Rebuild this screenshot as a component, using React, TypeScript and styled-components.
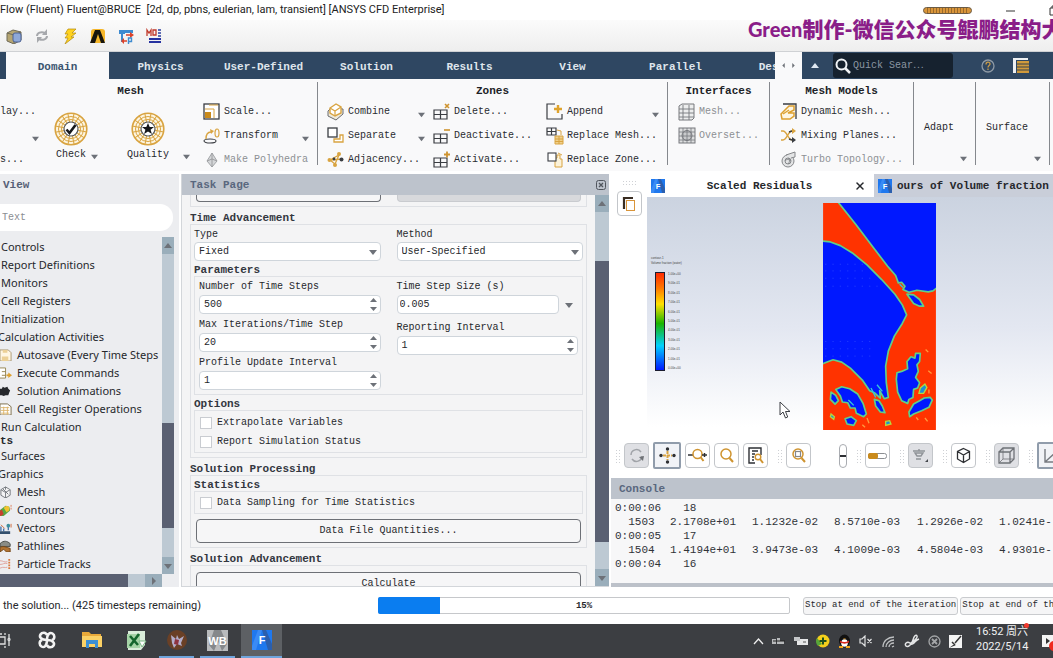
import React, { useId } from "react";
import styled, { createGlobalStyle, css } from "styled-components";
import { X } from "lucide-react";

const mono = `"Liberation Mono", "Noto Sans CJK SC", monospace`;
const sans = `"Noto Sans", "Noto Sans CJK SC", sans-serif`;
const captionFont = `Roboto, "Noto Sans CJK SC", sans-serif`;
const gold = "#d9a441";
const ink = "#3a3d42";

const GlobalStyle = createGlobalStyle`
  * { box-sizing: border-box; }
  body { margin: 0; overflow: hidden; background: #fff; color: #26282c; font: 10px/14px ${mono}; }
  button, input, select { font: inherit; color: inherit; margin: 0; padding: 0; }
  h2, h3 { margin: 0; }
  svg { display: block; flex: none; }
`;

const Window = styled.div`
  display: flex;
  flex-direction: column;
  height: 100vh;
  overflow: hidden;
`;

/* ---------- title bar and quick toolbar ---------- */

const TitleBar = styled.header`
  display: flex;
  align-items: center;
  justify-content: space-between;
  height: 20px;
  flex: none;
  white-space: pre;
  font: 11px/20px ${captionFont};
  color: #222;
`;
const WindowControls = styled.div`
  display: flex;
  align-items: center;
  gap: 34px;
  overflow: hidden;
  width: 130px;
`;
const QuickBar = styled.div`
  position: relative;
  display: flex;
  align-items: center;
  gap: 12px;
  height: 32px;
  flex: none;
  padding-left: 6px;
  background: linear-gradient(#fbfbfb, #eeeeee);
  border-bottom: 1px solid #cfd1d4;
`;
const IconButton = styled.button`
  display: grid;
  place-items: center;
  width: 16px;
  height: 16px;
  border: 0;
  background: none;
`;
const Watermark = styled.div`
  position: absolute;
  left: 748px;
  top: -5px;
  white-space: nowrap;
  font: 900 21px/26px "Noto Sans CJK SC", sans-serif;
  color: #8a1d88;
  span { font: 900 20px/26px Lato, sans-serif; }
`;

/* ---------- ribbon ---------- */

const Nav = styled.nav`
  display: flex;
  height: 27px;
  flex: none;
  background: #2f4762;
  color: #e4e9ef;
`;
const TabStrip = styled.div`
  display: flex;
  width: 775px;
  overflow: hidden;
  padding-left: 6px;
`;
const NavTab = styled.button<{ $active?: boolean }>`
  flex: 0 0 103px;
  padding-top: 3px;
  border: 0;
  background: ${(p) => (p.$active ? "#f9f9fa" : "none")};
  color: ${(p) => (p.$active ? "#3c5570" : "#dfe5ec")};
  font: bold 11px/24px ${mono};
`;
const TabScroll = styled.div`
  display: flex;
  align-items: center;
  justify-content: space-evenly;
  width: 27px;
  background: #f9f9fa;
`;
const Collapse = styled.button`
  display: grid;
  place-items: center;
  width: 26px;
  margin-right: 5px;
  border: 0;
  background: none;
`;
const Search = styled.label`
  display: flex;
  align-items: center;
  gap: 2px;
  width: 120px;
  margin: 1px 0;
  padding-left: 2px;
  border-radius: 3px;
  background: #16222f;
  input {
    width: 90px;
    border: 0;
    background: none;
    outline: none;
    font: 10px/14px ${mono};
    &::placeholder { color: #8b96a2; opacity: 1; }
  }
`;
const NavTools = styled.div`
  display: flex;
  align-items: center;
  gap: 17px;
  margin-left: 28px;
`;

const Ribbon = styled.div`
  display: flex;
  height: 95px;
  flex: none;
  padding: 3px 0 6px;
  background: #f9f9fa;
  border-bottom: 3px solid #fff;
`;
const Group = styled.section<{ $w: number }>`
  display: flex;
  flex-direction: column;
  flex: 0 0 ${(p) => p.$w}px;
  border-right: 1px solid #85888d;
`;
const GroupTitle = styled.h2<{ $shift?: boolean }>`
  font: bold 11px/18px ${mono};
  text-align: center;
  color: #202226;
  ${(p) => p.$shift && css`padding-right: 56px;`}
`;
const GroupBody = styled.div<{ $pad: number }>`
  display: flex;
  padding-left: ${(p) => p.$pad}px;
`;
const Stack = styled.div<{ $w: number }>`
  display: flex;
  flex-direction: column;
  flex: 0 0 ${(p) => p.$w}px;
`;
const Command = styled.button<{ $off?: boolean }>`
  display: flex;
  align-items: center;
  gap: 3px;
  height: 24px;
  border: 0;
  background: none;
  text-align: left;
  white-space: nowrap;
  color: ${(p) => (p.$off ? "#8d9094" : "#2a2c30")};
  svg:nth-of-type(2) { margin: 5px 8px 0 auto; }
`;
const BigCommand = styled.button<{ $w: number; $gap?: number }>`
  display: flex;
  align-items: flex-end;
  gap: ${(p) => p.$gap ?? 0}px;
  width: ${(p) => p.$w}px;
  height: 62px;
  border: 0;
  background: none;
  > svg { margin-bottom: 2px; }
`;
const BigFace = styled.span<{ $w: number }>`
  display: flex;
  flex-direction: column;
  align-items: center;
  gap: 2px;
  width: ${(p) => p.$w}px;
`;
const CutColumn = styled.div`
  display: flex;
  flex-direction: column;
  width: 51px;
`;
const DropOnly = styled(Command)`
  justify-content: flex-end;
  padding: 5px 12px 0 0;
`;
const PlainGroup = styled.button<{ $w: number }>`
  display: flex;
  flex-direction: column;
  align-items: flex-end;
  justify-content: space-between;
  flex: 0 0 ${(p) => p.$w}px;
  padding: 39px 8px 3px 10px;
  border: 0;
  border-right: 1px solid #85888d;
  background: none;
  span { width: 100%; text-align: left; }
`;

/* ---------- main area ---------- */

const Main = styled.main`
  display: flex;
  flex: 1;
  min-height: 0;
  gap: 2px;
`;
const Outline = styled.aside`
  display: flex;
  flex-direction: column;
  flex: 0 0 179px;
  overflow: hidden;
  background: #ecedf0;
`;
const OutlineTitle = styled.h2`
  padding-left: 3px;
  font: bold 11px/22px ${mono};
  color: #566076;
`;
const Filter = styled.input`
  width: 173px;
  height: 27px;
  margin: 8px 0 6px;
  padding: 0 2px;
  border: 0;
  border-radius: 0 13px 13px 0;
  background: #fff;
  &::placeholder { color: #8a8d92; opacity: 1; }
`;
const TreeArea = styled.div`
  display: flex;
  flex: 1;
  min-height: 0;
`;
const Tree = styled.ul`
  width: 162px;
  margin: 0;
  padding: 1px 0 0;
  overflow: hidden;
  list-style: none;
  font: 11px/18px ${sans};
`;
const TreeItem = styled.li<{ $level: number }>`
  display: flex;
  align-items: center;
  gap: 5px;
  height: 18px;
  margin-left: ${(p) => [-2, 1, 0][p.$level]}px;
  white-space: nowrap;
`;
const TreeHeading = styled.li`
  font: bold 11px/11px ${mono};
`;
const HScroll = styled.div`
  display: flex;
  justify-content: flex-end;
  width: 162px;
  height: 13px;
  border-left: 128px solid #5a6072;
  background: #bdc9d3;
`;

const VBar = styled.div<{ $w: number }>`
  display: flex;
  flex-direction: column;
  flex: 0 0 ${(p) => p.$w}px;
  background: #bdc9d3;
`;
const BarEnd = styled.button`
  display: grid;
  place-items: center;
  flex: 0 0 17px;
  width: 100%;
  border: 0;
  background: #9aaebb;
`;
const BarTrack = styled.div<{ $grow: number }>`
  flex: ${(p) => p.$grow} 1 0;
`;
const BarThumb = styled(BarTrack)`
  background: #5a6072;
`;

const TaskPanel = styled.section`
  display: flex;
  flex-direction: column;
  flex: 0 0 428px;
  min-width: 0;
  border: 1px solid #d3d6da;
  border-top: 0;
  border-right: 0;
  background: #f4f4f5;
`;
const PanelTitle = styled.header`
  display: flex;
  align-items: center;
  justify-content: space-between;
  height: 21px;
  flex: none;
  padding: 0 0 0 8px;
  background: #bdc3cc;
  h2 { font: bold 11px/20px ${mono}; color: #59677e; }
`;
const TaskBody = styled.div`
  display: flex;
  flex: 1;
  min-height: 0;
`;
const Form = styled.form`
  flex: 1;
  min-width: 0;
  overflow: hidden;
  padding: 0 8px;
`;
const CutBox = styled.div`
  display: flex;
  gap: 16px;
  height: 12px;
  padding: 0 5px;
  border: 1px solid #dfe1e5;
  border-top: 0;
`;
const CutButton = styled.button<{ $off?: boolean }>`
  flex: 1;
  height: 7px;
  border: 1px solid ${(p) => (p.$off ? "#c9cbcf" : "#6d7076")};
  border-top: 0;
  border-radius: 0 0 4px 4px;
  background: ${(p) => (p.$off ? "#d8d9dc" : "#f6f6f7")};
`;
const SectionTitle = styled.h3<{ $inner?: boolean }>`
  margin-top: ${(p) => (p.$inner ? 3 : 5)}px;
  font: bold 11px/12px ${mono};
  color: #33373f;
`;
const Box = styled.div<{ $pad: string }>`
  padding: ${(p) => p.$pad};
  border: 1px solid #dfe1e5;
`;
const Columns = styled.div`
  display: grid;
  grid-template-columns: 1fr 1fr;
  gap: 16px;
`;
const FieldStack = styled.div<{ $gap: number }>`
  display: flex;
  flex-direction: column;
  gap: ${(p) => p.$gap}px;
`;
const FieldLabel = styled.label<{ $tall?: boolean }>`
  display: block;
  line-height: ${(p) => (p.$tall ? 17 : 14)}px;
`;
const FieldFrame = styled.div`
  display: flex;
  align-items: center;
  gap: 6px;
  height: 19px;
  padding-right: 3px;
  border: 1px solid #cfd5db;
  border-radius: 4px;
  background: #fff;
  input, select {
    flex: 1;
    min-width: 0;
    height: 17px;
    padding-left: 4px;
    border: 0;
    border-radius: 4px;
    background: none;
    appearance: none;
    outline: none;
  }
`;
const SizeRow = styled.div`
  display: flex;
  align-items: center;
  gap: 6px;
  padding-right: 5px;
  ${FieldFrame} { flex: 1; padding: 0; input { padding-left: 2px; } }
`;
const CheckLabel = styled.label`
  display: flex;
  align-items: center;
  gap: 5px;
  height: 19px;
  padding-left: 5px;
  input {
    width: 12px;
    height: 12px;
    appearance: none;
    border: 1px solid #c9ccd1;
    background: #fff;
  }
`;
const WideButton = styled.button`
  display: block;
  width: calc(100% - 4px);
  height: 24px;
  margin: 5px 2px 4px;
  border: 1px solid #6d7076;
  border-radius: 4px;
  background: #f6f6f7;
`;

/* ---------- graphics and console ---------- */

const RightSide = styled.section`
  display: flex;
  flex-direction: column;
  flex: 1;
  min-width: 0;
  overflow: hidden;
  background: #fff;
`;
const Graphics = styled.div`
  display: flex;
  flex: 1;
  min-height: 0;
`;
const SideTools = styled.div`
  display: flex;
  flex-direction: column;
  align-items: center;
  gap: 6px;
  width: 36px;
  padding: 6px 0 0 0;
`;
const ViewArea = styled.div`
  display: flex;
  flex-direction: column;
  flex: 1;
  min-width: 0;
`;
const PlotTabs = styled.div`
  display: flex;
  height: 23px;
  flex: none;
  background: #c9ced9;
`;
const PlotTab = styled.button<{ $active?: boolean }>`
  display: flex;
  align-items: center;
  justify-content: ${(p) => (p.$active ? "space-between" : "flex-start")};
  gap: 5px;
  flex: 0 0 ${(p) => (p.$active ? 227 : 190)}px;
  padding: 0 8px 0 4px;
  border: 0;
  background: ${(p) => (p.$active ? "#fff" : "none")};
  font: bold 11px/20px ${mono};
  white-space: nowrap;
`;
const Plot = styled.div`
  position: relative;
  display: flex;
  flex: 1;
  min-height: 0;
  padding: 6px 0 0 4px;
  background: linear-gradient(#cbd3e0, #e3e7f1 55%, #ffffff 97%);
`;
const Legend = styled.div`
  width: 172px;
  padding-top: 53px;
  font: 3px/5px "Liberation Sans", sans-serif;
  color: #444;
`;
const LegendScale = styled.div`
  display: flex;
  gap: 3px;
  height: 99px;
  margin: 6px 0 0 4px;
`;
const LegendBar = styled.div`
  width: 10px;
  border: 1px solid #1b1c30;
  background: linear-gradient(#ff2a00, #ff7a00 16%, #ffe000 32%, #19b400 52%, #00d0ff 75%, #0018ff);
`;
const LegendTicks = styled.div`
  display: flex;
  flex-direction: column;
  justify-content: space-between;
`;
const Pointer = styled.svg`
  position: absolute;
  left: 132px;
  top: 204px;
`;
const ViewTools = styled.div`
  display: flex;
  align-items: center;
  gap: 4px;
  height: 44px;
  flex: none;
  padding: 0 0 1px 4px;
  overflow: hidden;
`;
const ToolButton = styled.button<{ $kind?: "on" | "off" }>`
  display: grid;
  place-items: center;
  flex: none;
  width: ${(p) => (p.$kind === "on" ? 28 : 25)}px;
  height: ${(p) => (p.$kind === "on" ? 27 : 25)}px;
  border: ${(p) => (p.$kind === "on" ? "2px solid #909cab" : "1px solid #c3c6ca")};
  border-radius: ${(p) => (p.$kind === "on" ? 2 : 4)}px;
  background: ${(p) => (p.$kind === "off" ? "#dfe0e4" : p.$kind === "on" ? "#f1f3f7" : "#fff")};
`;
const Handle = styled.i<{ $flat?: boolean; $first?: boolean }>`
  flex: none;
  width: ${(p) => (p.$flat ? 14 : 5)}px;
  height: ${(p) => (p.$flat ? 5 : 14)}px;
  margin-left: ${(p) => (p.$first || p.$flat ? 0 : 5)}px;
  background: radial-gradient(#cfd1d5 1px, transparent 1px) 0 0 / 3px 3px;
`;
const MiniSlider = styled.div`
  display: grid;
  place-items: center;
  width: 8px;
  height: 24px;
  margin-left: 24px;
  border: 1px solid #a9acb1;
  border-radius: 4px;
`;
const ConsoleArea = styled.div`
  flex: none;
  height: 88px;
  padding-top: 2px;
  border-bottom: 4px solid #bcc1c9;
  background: #f7f7f8;
  overflow: hidden;
`;
const ConsoleTable = styled.table`
  margin-left: 4px;
  border-spacing: 0;
  table-layout: fixed;
  width: 466px;
  font: 11px/14px ${mono};
  color: #303338;
  td { padding: 0; white-space: pre; overflow: visible; }
`;

/* ---------- status and task bars ---------- */

const StatusBar = styled.footer`
  display: flex;
  align-items: center;
  height: 37px;
  flex: none;
  white-space: nowrap;
`;
const StatusText = styled.span`
  flex: 0 0 378px;
  padding-left: 3px;
  font: 11px/18px ${captionFont};
`;
const Progress = styled.div`
  position: relative;
  flex: 0 0 412px;
  height: 17px;
  margin-right: 13px;
  border: 1px solid #c6c8cb;
  border-radius: 2px;
  text-align: center;
  font: bold 9px/16px ${mono};
`;
const ProgressFill = styled.div`
  position: absolute;
  inset: -1px auto -1px -1px;
  border-radius: 2px 0 0 2px;
  background: #0a7df0;
`;
const StopButton = styled.button`
  flex: none;
  height: 18px;
  margin-right: 2px;
  padding: 0 1px;
  border: 1px solid #c9cbce;
  border-radius: 3px;
  background: #f5f5f6;
  font: 9px/15px ${mono};
`;
const TaskBar = styled.div`
  display: flex;
  align-items: stretch;
  height: 34px;
  flex: none;
  background: #3c3e42;
  color: #f0f1f2;
`;
const LauncherButton = styled.button<{ $state?: "cut" | "open" | "active" }>`
  display: grid;
  place-items: center;
  width: ${(p) => ({ cut: 24, open: 35, active: 41, idle: 45 })[p.$state ?? "idle"]}px;
  margin-right: ${(p) => (p.$state === "open" ? 6 : 0)}px;
  border: 0;
  border-bottom: 2px solid ${(p) => (p.$state && p.$state !== "cut" ? "#6ea4dc" : "transparent")};
  background: ${(p) => (p.$state === "active" ? "#5d6064" : "none")};
  ${(p) => p.$state === "cut" && css`justify-content: start;`}
`;
const Launchers = styled.div`
  display: flex;
  flex: 1;
`;
const Tray = styled.div`
  display: flex;
  align-items: center;
  gap: 8px;
`;
const Clock = styled.div`
  position: relative;
  width: 53px;
  margin: 0 9px 0 14px;
  font: 11px/15px Roboto, "Noto Sans CJK SC", sans-serif;
  white-space: nowrap;
  &::after {
    content: "";
    position: absolute;
    right: 0;
    top: -1px;
    width: 5px;
    height: 5px;
    border-radius: 50%;
    background: #f03a2e;
  }
`;

/* ---------- drawings ---------- */

const Tri = ({ up, left, right, color = "#6d7178", s = 8 }: { up?: boolean; left?: boolean; right?: boolean; color?: string; s?: number }) => (
  <svg width={s} height={s} viewBox="0 0 8 8">
    <path fill={color} d={up ? "M0 6h8L4 1z" : left ? "M6 0v8L2 4z" : right ? "M2 0v8l4-4z" : "M0 2h8L4 7z"} />
  </svg>
);

const art: Record<string, React.ReactNode> = {
  cube3: <><path d="M1 5l6-3 8 2v8l-7 4-7-3z" fill="#b5a571" stroke="#6f6a58" /><path d="M1 5l7 2v9M8 7l7-3" fill="none" stroke="#6f6a58" /><rect x="7" y="5" width="8" height="9" rx="2" fill="#8ea8d8" stroke="#4c6294" /></>,
  refresh: <g fill="none" stroke="#a6a8ac" strokeWidth="2"><path d="M3 8c0-3 4-5 8-3" /><path d="M13 8c0 3-4 5-8 3" /><path d="M13 1v6H8zM3 15V9h5z" fill="#a6a8ac" strokeWidth="0" /></g>,
  bolt: <path d="M6 1h8l-4 4h4l-5 4h3l-9 7 3-6H3l3-4H3z" fill="#ffd21f" stroke="#b38a0c" strokeWidth=".7" />,
  ansys: <><rect x="1" y="1" width="14" height="14" rx="3" fill="#f5b62a" /><path d="M0 15L5 2h5l5 13h-4L8 6l-3 9z" fill="#17140c" /></>,
  params: <><path d="M1 2h14v3H1z" fill="#3e8bd0" /><path d="M4 5v9M1 5h6" stroke="#3e8bd0" strokeWidth="2" /><path d="M8 7h5M5 13h4" stroke="#d9412a" strokeWidth="1.6" /><path d="M12 4l4 3-4 3zM6 10l-3 3 3 3z" fill="#d9412a" /><path d="M10.500 16V10h3v3.500h-3" fill="none" stroke="#3e8bd0" strokeWidth="1.4" /></>,
  macro: <><path d="M1 8V2l2 3 2-3v6M7 2h3v5H7z" fill="none" stroke="#c0392b" strokeWidth="1.3" /><path d="M12 2h3M12 5h3M12 8h3" stroke="#2c3f9e" strokeWidth="1.4" /><path d="M3 11h12M3 14h12" stroke="#2632a0" strokeWidth="2" /></>,
  scale: <><rect x="1" y="1" width="15" height="15" fill="#fff" stroke={ink} strokeWidth="1.3" /><path d="M2 6h9v9M6 2h9" fill="none" stroke={gold} /><path d="M2 9h6v6H2z" fill="#c98a1b" /></>,
  transform: <g fill="none"><path d="M3 12c0-5 2-7 5-7" stroke={gold} strokeWidth="1.4" /><path d="M7 2l4 2-3 3z" fill={gold} /><ellipse cx="14" cy="6" rx="2" ry="4" stroke={gold} strokeWidth="1.2" /><ellipse cx="7" cy="14" rx="6" ry="2" stroke={ink} strokeWidth="1.1" /></g>,
  poly: <><path d="M9 2l5 8-5 6-5-6z" fill="#d5d7d9" stroke="#a3a5a8" /><path d="M9 2v14M4 10l5-2 5 2" fill="none" stroke="#97999c" strokeWidth=".9" /></>,
  combine: <><path d="M1 8l3-3 12 1v5l-7 6-8-4z" fill="#efe9da" stroke="#6b6d70" /><path d="M3 5l6-4 5 3v6l-6 3-5-3z" fill="#fff" stroke={gold} strokeWidth="1.4" /><path d="M3 5l5 3 6-4M8 8v5" fill="none" stroke={gold} strokeWidth="1.2" /></>,
  separate: <><rect x="1" y="1" width="9" height="9" fill="#fff" stroke={ink} strokeWidth="1.3" /><path d="M13 8h3v7H7v-3h6z" fill="#fff" stroke={gold} strokeWidth="1.3" /></>,
  adjacency: <><path d="M3 9l9-5-4 9-5-4 12-1" fill="none" stroke={gold} strokeWidth="1.3" /><g fill={gold}><circle cx="2.500" cy="9" r="2" /><circle cx="8" cy="14" r="2" /><circle cx="12" cy="3" r="2" /></g><circle cx="7" cy="8" r="1.4" fill={ink} /><circle cx="14.500" cy="8.500" r="2" fill={ink} /></>,
  gridDel: <><path d="M1 7h13v9H1zM7.500 7v9M1 11.500h13" fill="none" stroke={ink} strokeWidth="1.2" /><path d="M12 1l4 4M16 1l-4 4" stroke="#cf9430" strokeWidth="1.600" /></>,
  gridMinus: <><path d="M1 7h13v9H1zM7.500 7v9M1 11.500h13" fill="none" stroke={ink} strokeWidth="1.2" /><path d="M11 3h6" stroke="#cf9430" strokeWidth="1.600" /></>,
  gridPlus: <><path d="M1 7h13v9H1zM7.500 7v9M1 11.500h13" fill="none" stroke={ink} strokeWidth="1.2" /><path d="M11 3.500h6M14 .5v6" stroke="#cf9430" strokeWidth="1.800" /></>,
  append: <><path d="M9 1H1v15h15v-5" fill="none" stroke={ink} strokeWidth="1.2" /><path d="M8 6h8M12 2v8" stroke="#dfa32d" strokeWidth="2.400" /></>,
  replMesh: <><path d="M1 1h9v7H1zM5.500 1v7M1 4.500h9" fill="none" stroke={ink} strokeWidth="1.2" /><path d="M9 9h8v8H9z" fill="#efd08c" stroke={gold} /><path d="M9 12h8M9 14.500h8M13 9v8" stroke={gold} /><path d="M11 3l4 1v4" fill="none" stroke={gold} /></>,
  replZone: <><path d="M9 7h2V4h3v4h2v8H9z" fill="#fbf2da" stroke={gold} /><rect x="2" y="2" width="8" height="8" fill="#fff" stroke={ink} strokeWidth="1.1" /><path d="M12 2l4 2" stroke={gold} /></>,
  meshGrid: <g fill="#eceded" stroke="#77797d"><path d="M1 3l3-2h12v14l-2 2H1z" /><path d="M1 10h15M5 2v15M11 2v15M1 6h15M1 14h15" strokeWidth=".9" /></g>,
  overset: <g fill="#dedfe0" stroke="#77797d"><rect x="1" y="1" width="16" height="15" /><circle cx="9" cy="8.500" r="5" fill="#c9cacc" /><path d="M5 1v15M9 1v15M13 1v15M1 5h16M1 9h16M1 13h16" strokeWidth=".8" /></g>,
  dynamic: <><path d="M3 1h13v15" fill="none" stroke={ink} strokeWidth="1.3" /><path d="M1 11l8-8h5v4l-6 3h6v3l-4 3H2z" fill="#fdf6e4" stroke="#dda02f" strokeWidth="1.5" /><path d="M3 11l6-4" stroke="#dda02f" strokeWidth="1.3" /></>,
  mixing: <g fill="none" strokeWidth="1.5"><path d="M1 4h2c4 0 5 9 9 9" stroke={gold} /><path d="M1 13h2c4 0 5-9 9-9" stroke={gold} /><path d="M9 5l3-1M9 12l3 1" stroke={ink} /><path d="M12 1l4 3-4 3z" fill={gold} /><path d="M12 10l4 3-4 3z" fill={ink} /></g>,
  turbo: <g fill="#e3e4e5" stroke="#85878a"><circle cx="8" cy="10" r="6" /><path d="M6 4l9-3v5l-4 1" /><circle cx="8" cy="10" r="3" /><path d="M8 7c2 1 2 4 0 6M5 10c1-2 4-2 6 0" fill="none" /></g>,
  save: <><path d="M0 1h9l3 3v9H0z" fill="#fff6e3" stroke="#a99772" /><path d="M2 8h7v5H2zM3 1h5v3H3z" fill="#ecd096" /></>,
  exec: <><path d="M0 1h6v11H0M2 5h4M2 9h4" fill="#fff" stroke="#96834f" /><path d="M7 9h3" stroke="#dda02f" strokeWidth="2" /><path d="M9 6l4 3-4 3z" fill="#dda02f" /></>,
  gear: <path d="M3 2l2 1 3-1 1 2 2 2-1 2-1 3-3 0-2 1-2-1-2 0V4h2z" fill="#26282c" />,
  cell: <><path d="M0 1h8l4 3v9H0z" fill="#fff" stroke="#7a6a45" /><path d="M1 5h9M1 8h9M1 11h9M4 4v9M8 4v9" stroke="#dcb56b" /></>,
  meshBall: <g fill="#f5f5f6" stroke="#70747a"><path d="M6 1l5 3v6l-5 3-5-3V4z" /><path d="M1 4l5 3 5-3M6 7v6M6 1v3M3 3l6 6" /></g>,
  contour: <><path d="M-2 8l8-6 4 1 1 4-7 6h-6z" fill="#58a744" /><path d="M4 4l3-2 3 1 0 4-3 2z" fill="#f2c230" /><path d="M-1 8l3-2 2 5-3 2h-2z" fill="#c8402f" /><path d="M12 1v6" stroke="#dd7a55" strokeDasharray="2 1" /></>,
  vectors: <><path d="M1 10V5M4 10V7M9 9V3" stroke="#3e6ea8" strokeWidth="1.4" /><path d="M0 10h11v3H0z" fill="#33506e" /><circle cx="9" cy="4" r="2" fill="#3c8f9e" /><path d="M1 3l4 4M12 2v4" stroke="#d26a3a" /></>,
  path: <><path d="M0 4c4-4 8-3 11 0v3H0z" fill="#8a8d86" stroke="#474b46" /><path d="M0 8c4-2 7 0 11 1v4H7l-3-3-4 3z" fill="#b07332" stroke="#704416" /></>,
  particle: <><path d="M0 3c4 0 4 2 8 1M0 7c4 0 4-2 8-1M0 11c4-2 5 0 8-1" fill="none" stroke="#e2a19a" /><path d="M10 1v12" stroke="#d97a40" strokeDasharray="2 1" strokeWidth="2" /></>,
};

const Art = ({ n, s = 18 }: { n: string; s?: number }) => {
  const box = s === 16 ? 16 : s === 12 ? 13 : 18;
  return <svg width={s} height={s} viewBox={`0 0 ${box} ${box}`}>{art[n]}</svg>;
};

const MeshWheel = ({ star }: { star?: boolean }) => (
  <svg width="34" height="34" viewBox="0 0 34 34" fill="none" stroke={gold}>
    <circle cx="17" cy="17" r="15.800" fill="#fdf5e0" strokeWidth="1.6" />
    <circle cx="17" cy="17" r="12.500" />
    <circle cx="17" cy="17" r="9.500" />
    {Array.from({ length: 16 }, (_, i) => (
      <path key={i} d="M17 1v9" transform={`rotate(${i * 22.5 + 11} 17 17)`} />
    ))}
    <circle cx="17" cy="17" r="7" fill="#fff" stroke="#55585c" strokeWidth="1.2" />
    {star ? <path fill="#16181b" stroke="none" d="M17 11l1.700 4h4.300l-3.400 2.700 1.300 4.300-3.900-2.500-3.900 2.500 1.300-4.300-3.400-2.700h4.300z" /> : <path d="M12.500 17.500l3 3.500 6-8" stroke="#16181b" strokeWidth="2.600" />}
  </svg>
);

const FluentLogo = ({ s }: { s: number }) => (
  <svg width={s} height={s} viewBox="0 0 20 20">
    <rect width="20" height="20" fill="#1f78ee" />
    <path d="M10 0h4l6 14v6h-4z" fill="#2b5fae" />
    <path d="M6 0h4L4 20H0v-4z" fill="#3a8bf5" />
    <text x="10" y="14" fontSize="11" fontWeight="bold" fill="#fff" textAnchor="middle" fontFamily="Liberation Sans, sans-serif">F</text>
  </svg>
);

const PhaseField = () => {
  const edge = { stroke: "#5fd08a", strokeWidth: 5, strokeLinejoin: "round" as const };
  return (
    <svg width="113" height="227" viewBox="68 100 339 682">
      <rect x="68" y="100" width="339" height="682" fill="#ff3300" />
      <g fill="#0018ff" {...edge}>
        <path d="M112 96L166 164 216 230 262 290 286 318 294 340 304 338 314 350 308 360 326 368 350 362 384 367 398 364 411 354V96z" />
        <path d="M64 214L90 217 120 228 156 250 200 286 244 330 284 374 306 406 319 436 306 462 282 500 264 545 256 590 258 640 264 684 252 688 238 664 240 686 222 670 208 664 186 632 150 596 124 578 98 571 84 576 64 584z" />
        <path d="M320 374L340 376 358 390 370 410 358 410 340 402z" />
        <path d="M346 552L360 552 358 576 350 586 354 606 346 624 358 640 352 656 340 660 338 684 326 690 322 702 304 694 292 668 288 630 290 610 304 606 322 598 320 576 332 562 344 566z" />
        <path d="M390 684L396 692 386 714 364 724 340 734 328 742 326 728 340 704 358 694 372 686z" />
        <path d="M106 660L124 652 148 658 172 674 188 702 198 734 190 742 168 732 164 716 150 716 142 700 126 698 120 680z" />
        <path d="M92 668L106 678 114 694 104 704 90 690z" />
        <path d="M222 690L236 694 246 710 254 730 240 728 226 710z" />
        <path d="M134 748L152 742 168 754 160 768 140 764z" />
      </g>
      <g fill="#1d8fd8" stroke="#b7d93c" strokeWidth="4">
        <path d="M374 644L380 654 370 672 356 672 360 656z" />
        <path d="M92 734L102 742 100 750 90 742z" />
        <path d="M256 756L268 754 272 764 256 768z" />
        <path d="M230 646L246 666M212 656L226 684M144 692L160 708M298 344l10 10" fill="none" stroke="#34c8d8" />
      </g>
      <g stroke="#ff9a3c" strokeWidth="4"><path d="M376 540l8 8M384 604l10 8M386 660v12M348 744l6 8M374 746l8 10M200 746l6 16M186 766l8 8" /></g>
      <path d="M74 284h120M74 304h130M74 326h150M74 350h160M74 516h150M74 538h150M74 560h140" stroke="#2c48ff" strokeWidth="2" strokeDasharray="4 18" />
    </svg>
  );
};

/* ---------- composed controls ---------- */

const Cmd = ({ icon, text, off, drop }: { icon: string; text: string; off?: boolean; drop?: boolean }) => (
  <Command type="button" $off={off}>
    <Art n={icon} />
    {text}
    {drop && <Tri s={7} />}
  </Command>
);

const Pick = ({ label, value }: { label: string; value: string }) => {
  const id = useId();
  return (
    <div>
      <FieldLabel htmlFor={id}>{label}</FieldLabel>
      <FieldFrame>
        <select id={id} defaultValue={value}><option>{value}</option></select>
        <Tri />
      </FieldFrame>
    </div>
  );
};

const Spin = ({ label, value }: { label: string; value: string }) => {
  const id = useId();
  return (
    <div>
      <FieldLabel $tall htmlFor={id}>{label}</FieldLabel>
      <FieldFrame>
        <input id={id} defaultValue={value} />
        <svg width="7" height="15" viewBox="0 0 7 15"><path fill="#6d7178" d="M0 5h7L3.500 1zM0 10h7l-3.500 4z" /></svg>
      </FieldFrame>
    </div>
  );
};

const Check = ({ label }: { label: string }) => (
  <CheckLabel><input type="checkbox" />{label}</CheckLabel>
);

const ScrollBar = ({ w, parts }: { w: number; parts: [number, number, number] }) => (
  <VBar $w={w}>
    <BarEnd type="button" aria-label="Scroll up"><Tri up /></BarEnd>
    <BarTrack $grow={parts[0]} />
    <BarThumb $grow={parts[1]} />
    <BarTrack $grow={parts[2]} />
    <BarEnd type="button" aria-label="Scroll down"><Tri /></BarEnd>
  </VBar>
);

const navTabs = ["Domain", "Physics", "User-Defined", "Solution", "Results", "View", "Parallel", "Design"];

const tree: { t: string; l: number; i?: string }[] = [
  { t: "Controls", l: 1 }, { t: "Report Definitions", l: 1 }, { t: "Monitors", l: 1 },
  { t: "Cell Registers", l: 1 }, { t: "Initialization", l: 1 }, { t: "Calculation Activities", l: 0 },
  { t: "Autosave (Every Time Steps", l: 2, i: "save" }, { t: "Execute Commands", l: 2, i: "exec" },
  { t: "Solution Animations", l: 2, i: "gear" }, { t: "Cell Register Operations", l: 2, i: "cell" },
  { t: "Run Calculation", l: 1 }, { t: "ts", l: -1 }, { t: "Surfaces", l: 1 }, { t: "Graphics", l: 0 },
  { t: "Mesh", l: 2, i: "meshBall" }, { t: "Contours", l: 2, i: "contour" }, { t: "Vectors", l: 2, i: "vectors" },
  { t: "Pathlines", l: 2, i: "path" }, { t: "Particle Tracks", l: 2, i: "particle" },
];

const consoleRows: string[][] = [
  ["0:00:06", "  18"],
  ["  1503", "2.1708e+01", "1.1232e-02", "8.5710e-03", "1.2926e-02", "1.0241e-"],
  ["0:00:05", "  17"],
  ["  1504", "1.4194e+01", "3.9473e-03", "4.1009e-03", "4.5804e-03", "4.9301e-"],
  ["0:00:04", "  16"],
];

const ticks = ["1.00e+00", "9.00e-01", "8.00e-01", "7.00e-01", "6.00e-01", "5.00e-01", "4.00e-01", "3.00e-01", "2.00e-01", "1.00e-01", "0.00e+00"];

const Lens = ({ children, s = 17 }: { children?: React.ReactNode; s?: number }) => (
  <svg width={s} height={s} viewBox="0 0 17 17" fill="none" stroke="#cf9430" strokeWidth="1.5">
    <circle cx="8" cy="7" r="5" /><path d="M11.500 11l3.500 4" strokeWidth="2" />{children}
  </svg>
);

export default function App() {
  const sizeId = useId();
  return (
    <Window>
      <GlobalStyle />
      <TitleBar>
        <span>Flow (Fluent) Fluent@BRUCE  [2d, dp, pbns, eulerian, lam, transient] [ANSYS CFD Enterprise]</span>
        <WindowControls>
          <svg width="49" height="7" viewBox="0 0 49 7">
            <rect x=".5" y=".5" width="48" height="6" rx="3" fill="#d9953a" stroke="#6b5b45" />
            <path d="M4 3.500h41" stroke="#9b6a2a" strokeWidth="5" strokeDasharray="1 2" />
          </svg>
          <svg width="9" height="9" viewBox="0 0 9 9"><path d="M0 5h9" stroke="#333" /></svg>
          <svg width="11" height="11" viewBox="0 0 11 11"><path d="M1 3h7v7H1zM3 3V1h7v7H8" fill="none" stroke="#333" /></svg>
        </WindowControls>
      </TitleBar>
      <QuickBar>
        {["cube3", "refresh", "bolt", "ansys", "params", "macro"].map((n) => (
          <IconButton key={n} type="button" aria-label={n}><Art n={n} s={16} /></IconButton>
        ))}
        <Watermark><span>Green</span>制作-微信公众号鲲鹏结构大</Watermark>
      </QuickBar>

      <Nav>
        <TabStrip>
          {navTabs.map((t, i) => <NavTab key={t} type="button" $active={i === 0}>{t}</NavTab>)}
        </TabStrip>
        <TabScroll><Tri left s={5} /><Tri right s={5} /></TabScroll>
        <Collapse type="button" aria-label="Collapse ribbon"><Tri up color="#dfe8f2" /></Collapse>
        <Search>
          <svg width="16" height="16" viewBox="0 0 16 16" fill="none" stroke="#f0f3f6" strokeWidth="2"><circle cx="6.500" cy="6.500" r="5" /><path d="M10 10l5 5" strokeWidth="2.500" /></svg>
          <input aria-label="Quick Search" placeholder="Quick Sear⋯" />
        </Search>
        <NavTools>
          <svg width="14" height="14" viewBox="0 0 14 14" fill="none" stroke="#8e9aa6" strokeWidth="1.3"><circle cx="7" cy="7" r="6" /><path d="M5 5.500c0-3 4-3 4-.5 0 1.500-2 1.500-2 3.500M7 9.500v1.500" stroke="#c69a4a" /></svg>
          <svg width="17" height="17" viewBox="0 0 17 17"><path d="M1 1h15v2H1zM1 1h3v15H1z" fill="#eef0f2" /><path d="M5 4h12v12H5z" fill="#d09a3c" /><path d="M5 7h12M5 10h12M5 13h12" stroke="#37414b" /></svg>
        </NavTools>
      </Nav>

      <Ribbon>
        <Group $w={318}>
          <GroupTitle $shift>Mesh</GroupTitle>
          <GroupBody $pad={0}>
            <CutColumn>
              <Command type="button">lay...</Command>
              <DropOnly type="button" aria-label="More"><Tri s={7} /></DropOnly>
              <Command type="button">s...</Command>
            </CutColumn>
            <BigCommand type="button" $w={76}><BigFace $w={40}><MeshWheel />Check</BigFace><Tri s={7} /></BigCommand>
            <BigCommand type="button" $w={76} $gap={14}><BigFace $w={42}><MeshWheel star />Quality</BigFace><Tri s={7} /></BigCommand>
            <Stack $w={114}>
              <Cmd icon="scale" text="Scale..." />
              <Cmd icon="transform" text="Transform" drop />
              <Cmd icon="poly" text="Make Polyhedra" off />
            </Stack>
          </GroupBody>
        </Group>
        <Group $w={350}>
          <GroupTitle>Zones</GroupTitle>
          <GroupBody $pad={9}>
            <Stack $w={106}>
              <Cmd icon="combine" text="Combine" drop />
              <Cmd icon="separate" text="Separate" drop />
              <Cmd icon="adjacency" text="Adjacency..." />
            </Stack>
            <Stack $w={113}>
              <Cmd icon="gridDel" text="Delete..." />
              <Cmd icon="gridMinus" text="Deactivate..." />
              <Cmd icon="gridPlus" text="Activate..." />
            </Stack>
            <Stack $w={121}>
              <Cmd icon="append" text="Append" drop />
              <Cmd icon="replMesh" text="Replace Mesh..." />
              <Cmd icon="replZone" text="Replace Zone..." />
            </Stack>
          </GroupBody>
        </Group>
        <Group $w={102}>
          <GroupTitle>Interfaces</GroupTitle>
          <GroupBody $pad={10}>
            <Stack $w={90}>
              <Cmd icon="meshGrid" text="Mesh..." off />
              <Cmd icon="overset" text="Overset..." off />
            </Stack>
          </GroupBody>
        </Group>
        <Group $w={144}>
          <GroupTitle>Mesh Models</GroupTitle>
          <GroupBody $pad={10}>
            <Stack $w={130}>
              <Cmd icon="dynamic" text="Dynamic Mesh..." />
              <Cmd icon="mixing" text="Mixing Planes..." />
              <Cmd icon="turbo" text="Turbo Topology..." off />
            </Stack>
          </GroupBody>
        </Group>
        <PlainGroup type="button" $w={62}><span>Adapt</span><Tri s={7} /></PlainGroup>
        <PlainGroup type="button" $w={74}><span>Surface</span><Tri s={7} /></PlainGroup>
      </Ribbon>

      <Main>
        <Outline>
          <OutlineTitle>View</OutlineTitle>
          <Filter aria-label="Filter Text" placeholder="Text" />
          <TreeArea>
            <Tree>
              {tree.map(({ t, l, i }) =>
                l < 0 ? <TreeHeading key={t}>{t}</TreeHeading> : (
                  <TreeItem key={t} $level={l}>{i && <Art n={i} s={12} />}{t}</TreeItem>
                ))}
            </Tree>
            <ScrollBar w={12} parts={[169, 105, 29]} />
          </TreeArea>
          <HScroll><BarEnd type="button" aria-label="Scroll right"><Tri right /></BarEnd></HScroll>
        </Outline>

        <TaskPanel>
          <PanelTitle>
            <h2>Task Page</h2>
            <IconButton type="button" aria-label="Close">
              <svg width="10" height="10" viewBox="0 0 10 10" fill="none" stroke="#50555d"><rect x=".5" y=".5" width="9" height="9" rx="2" /><path d="M3 3l4 4M7 3l-4 4" strokeWidth="1.300" /></svg>
            </IconButton>
          </PanelTitle>
          <TaskBody>
            <Form>
              <CutBox><CutButton type="button" aria-label="Previous" /><CutButton type="button" aria-label="Next" $off /></CutBox>
              <SectionTitle>Time Advancement</SectionTitle>
              <Box $pad="3px 3px 4px">
                <Columns>
                  <Pick label="Type" value="Fixed" />
                  <Pick label="Method" value="User-Specified" />
                </Columns>
                <SectionTitle $inner>Parameters</SectionTitle>
                <Box $pad="1px 4px 4px">
                  <Columns>
                    <FieldStack $gap={2}>
                      <Spin label="Number of Time Steps" value="500" />
                      <Spin label="Max Iterations/Time Step" value="20" />
                      <Spin label="Profile Update Interval" value="1" />
                    </FieldStack>
                    <FieldStack $gap={5}>
                      <div>
                        <FieldLabel $tall htmlFor={sizeId}>Time Step Size (s)</FieldLabel>
                        <SizeRow>
                          <FieldFrame><input id={sizeId} defaultValue="0.005" /></FieldFrame>
                          <Tri />
                        </SizeRow>
                      </div>
                      <Spin label="Reporting Interval" value="1" />
                    </FieldStack>
                  </Columns>
                </Box>
                <SectionTitle $inner>Options</SectionTitle>
                <Box $pad="2px 0 1px">
                  <Check label="Extrapolate Variables" />
                  <Check label="Report Simulation Status" />
                </Box>
              </Box>
              <SectionTitle>Solution Processing</SectionTitle>
              <Box $pad="0 3px">
                <SectionTitle $inner>Statistics</SectionTitle>
                <Box $pad="1px 0"><Check label="Data Sampling for Time Statistics" /></Box>
                <WideButton type="button">Data File Quantities...</WideButton>
              </Box>
              <SectionTitle>Solution Advancement</SectionTitle>
              <Box $pad="1px 3px">
                <WideButton type="button">Calculate</WideButton>
              </Box>
            </Form>
            <ScrollBar w={14} parts={[49, 282, 27]} />
          </TaskBody>
        </TaskPanel>

        <RightSide>
          <Graphics>
            <SideTools>
              <Handle $flat />
              <ToolButton type="button" aria-label="Copy view">
                <svg width="14" height="14" viewBox="0 0 14 14" fill="none"><path d="M11 1H2v11" stroke="#3a2d22" strokeWidth="2.200" /><rect x="4.500" y="3.500" width="8" height="10" fill="#fff" stroke="#d9953a" /></svg>
              </ToolButton>
            </SideTools>
            <ViewArea>
              <PlotTabs>
                <PlotTab type="button" $active><FluentLogo s={14} />Scaled Residuals<X size={12} strokeWidth={3} /></PlotTab>
                <PlotTab type="button"><FluentLogo s={14} />ours of Volume fraction</PlotTab>
              </PlotTabs>
              <Plot>
                <Legend>
                  contour-1<br />Volume fraction (water)
                  <LegendScale>
                    <LegendBar />
                    <LegendTicks>{ticks.map((t) => <span key={t}>{t}</span>)}</LegendTicks>
                  </LegendScale>
                </Legend>
                <PhaseField />
                <Pointer width="12" height="18" viewBox="0 0 12 18"><path d="M1 1v13l3-3 2.500 6 2.200-1L6.500 10.500H11z" fill="#fff" stroke="#3c3f45" /></Pointer>
              </Plot>
            </ViewArea>
          </Graphics>
          <ViewTools>
            <Handle $first />
            <ToolButton type="button" $kind="off" aria-label="Rotate"><svg width="17" height="17" viewBox="0 0 17 17" fill="none" stroke="#a0a3a8" strokeWidth="1.500"><path d="M3 8a5.500 5.500 0 0 1 10-3M14 9a5.500 5.500 0 0 1-10 3" /><path d="M11 10l5-1-1 5z" fill="#6f7277" strokeWidth="0" /></svg></ToolButton>
            <ToolButton type="button" $kind="on" aria-label="Pan"><svg width="17" height="17" viewBox="0 0 17 17"><path d="M8.500 4v9M4 8.500h9" stroke={gold} strokeWidth="2" strokeDasharray="3 1" /><g fill="#2e3034"><circle cx="8.500" cy="2" r="1.700" /><circle cx="8.500" cy="15" r="1.700" /><circle cx="2" cy="8.500" r="1.700" /><circle cx="15" cy="8.500" r="1.700" /></g></svg></ToolButton>
            <ToolButton type="button" aria-label="Zoom in or out"><svg width="21" height="17" viewBox="0 0 21 17" fill="none"><path d="M1 8h5" stroke="#2e3034" strokeWidth="1.500" /><circle cx="10.500" cy="7" r="4.500" stroke="#cf9430" strokeWidth="1.500" /><path d="M13.500 10l3 4" stroke="#cf9430" strokeWidth="2" /><path d="M15 8h5M17.500 6v4" stroke="#2e3034" strokeWidth="1.500" /></svg></ToolButton>
            <ToolButton type="button" aria-label="Zoom"><Lens /></ToolButton>
            <ToolButton type="button" aria-label="Inspect"><svg width="17" height="17" viewBox="0 0 17 17" fill="none"><path d="M14 8V1H2v15h6M5 4h6M5 7h3M5 10h2M5 13h2" stroke="#2e3034" strokeWidth="1.400" /><circle cx="11" cy="10" r="2.800" stroke="#cf9430" strokeWidth="1.400" /><path d="M13 12l3 4" stroke="#cf9430" strokeWidth="2" /></svg></ToolButton>
            <Handle />
            <ToolButton type="button" aria-label="Fit"><Lens><rect x="5.500" y="4.500" width="5" height="5" stroke="#85888d" strokeWidth="1.200" /></Lens></ToolButton>
            <MiniSlider><svg width="6" height="4" viewBox="0 0 6 4"><path d="M0 2h6" stroke="#2e3034" strokeWidth="2" /></svg></MiniSlider>
            <Handle />
            <ToolButton type="button" aria-label="Probe"><svg width="19" height="6" viewBox="0 0 19 6"><rect x=".5" y=".5" width="18" height="5" rx="2" fill="#fff" stroke="#8b8e92" /><rect y="0" width="10" height="6" rx="2" fill="#c98a1b" /></svg></ToolButton>
            <Handle />
            <ToolButton type="button" $kind="off" aria-label="Headlight"><svg width="17" height="17" viewBox="0 0 17 17" fill="none" stroke="#8f9297"><path d="M1 4h12M3 6h8l-2 3H5zM7 2v2M4 12h5" strokeWidth="1.400" /><path d="M13 15h3v-3z" fill="#44474c" strokeWidth="0" /></svg></ToolButton>
            <Handle />
            <ToolButton type="button" aria-label="Isometric"><svg width="17" height="17" viewBox="0 0 17 17" fill="none" stroke="#2e3034" strokeWidth="1.300"><path d="M8.500 1.500l6 3v7.500l-6 3.500-6-3.500V4.500zM2.500 4.500l6 3.500 6-3.500M8.500 8v7.500" /></svg></ToolButton>
            <Handle />
            <ToolButton type="button" $kind="off" aria-label="Projection"><svg width="17" height="17" viewBox="0 0 17 17" fill="none" stroke="#6e7176" strokeWidth="1.300"><path d="M1 5h11v11H1zM1 5l4-4h11v11l-4 4M12 5l4-4" /><path d="M5 1v11h11M5 12l-4 4" strokeWidth=".8" /></svg></ToolButton>
            <Handle />
            <ToolButton type="button" $kind="on" aria-label="Axes"><svg width="17" height="17" viewBox="0 0 17 17" fill="none" stroke="#777b81" strokeWidth="1.400"><path d="M2 2v13h13M2 15L13 5" /></svg></ToolButton>
          </ViewTools>
          <PanelTitle><h2>Console</h2></PanelTitle>
          <ConsoleArea>
            <ConsoleTable>
              <colgroup><col width="55" /><col width="82" /><col width="82" /><col width="83" /><col width="82" /><col width="82" /></colgroup>
              <tbody>
                {consoleRows.map((r) => <tr key={r[0]}>{r.map((c, i) => <td key={i}>{c}</td>)}</tr>)}
              </tbody>
            </ConsoleTable>
          </ConsoleArea>
        </RightSide>
      </Main>

      <StatusBar>
        <StatusText>the solution... (425 timesteps remaining)</StatusText>
        <Progress role="progressbar" aria-valuenow={15}><ProgressFill style={{ width: "15%" }} />15%</Progress>
        <StopButton type="button">Stop at end of the iteration</StopButton>
        <StopButton type="button">Stop at end of the time step</StopButton>
      </StatusBar>

      <TaskBar>
        <Launchers>
          <LauncherButton type="button" $state="cut" aria-label="Task view">
            <svg width="12" height="16" viewBox="0 0 12 16" fill="none" stroke="#dfe0e1" strokeWidth="1.300"><path d="M0 5h5v7H0M0 2h2M5 1v2M5 14v2M9 2v4M9 9v5" /><circle cx="9" cy="7.500" r="1" /></svg>
          </LauncherButton>
          <LauncherButton type="button" aria-label="Browser">
            <svg width="18" height="18" viewBox="0 0 18 18" fill="none" stroke="#f2f2f2" strokeWidth="2.600"><path d="M9 9C3 9 1 6 2.500 3.500S8 1 9 4M9 9c0-6 3-8 5.500-6.500S17 8 14 9M9 9c6 0 8 3 6.500 5.500S10 17 9 14M9 9c0 6-3 8-5.500 6.500S1 10 4 9" /></svg>
          </LauncherButton>
          <LauncherButton type="button" aria-label="Files">
            <svg width="20" height="18" viewBox="0 0 20 18"><path d="M0 1h7l2 2h10v13H0z" fill="#e9a93a" /><path d="M0 5h20v11H0z" fill="#fbd166" /><path d="M4 9h12v8h-3v-4H7v4H4z" fill="#3b8fd6" /></svg>
          </LauncherButton>
          <LauncherButton type="button" aria-label="Spreadsheet">
            <svg width="20" height="19" viewBox="0 0 20 19"><path d="M1 0h17v14l-4 5H1V2z" fill="#d9ecd9" /><path d="M0 3h13v14H0z" fill="#a5d3a6" /><path d="M3 5l8 9M12 3L3 15" stroke="#14652c" strokeWidth="2.600" /><path d="M12 10h7l-4 6z" fill="#fff" stroke="#7bb886" /></svg>
          </LauncherButton>
          <LauncherButton type="button" $state="open" aria-label="Game">
            <svg width="20" height="20" viewBox="0 0 20 20"><circle cx="10" cy="10" r="10" fill="#6a4026" /><path d="M4 5l5 4 1-4 2 4 5-3-3 7 1 3-5-2-3 4-2-5z" fill="#b4aecb" /><path d="M8 9l4 1-1 5-4-1z" fill="#8e3340" /></svg>
          </LauncherButton>
          <LauncherButton type="button" $state="open" aria-label="Workbench">
            <svg width="21" height="21" viewBox="0 0 21 21"><rect width="21" height="21" fill="#b9bbbd" /><path d="M7 0h7l6 14-5 7-4-10-4 10-5-6z" fill="#85888b" /><text x="10.500" y="15" fontSize="11" fontWeight="bold" fill="#fff" textAnchor="middle" fontFamily="Liberation Sans, sans-serif">WB</text></svg>
          </LauncherButton>
          <LauncherButton type="button" $state="active" aria-label="Fluent"><FluentLogo s={20} /></LauncherButton>
        </Launchers>
        <Tray>
          <svg width="11" height="7" viewBox="0 0 11 7"><path d="M1 6l4.500-5L10 6" fill="none" stroke="#eee" strokeWidth="1.300" /></svg>
          <svg width="14" height="9" viewBox="0 0 14 9"><path d="M0 2h4v5H0zM5 1h3v3h4v3H5z" fill="#b8babc" /><path d="M1 4h12" stroke="#222" /></svg>
          <svg width="14" height="10" viewBox="0 0 14 10"><rect x="3" y="3" width="11" height="6" fill="#e6e7e8" /><path d="M0 1h6v4H0z" fill="#c5c7c9" /><path d="M9 6h3" stroke="#555" /></svg>
          <svg width="14" height="14" viewBox="0 0 14 14"><circle cx="7" cy="7" r="6.500" fill="#f4cf1b" /><path d="M2 12a7 7 0 0 1-1-8l5 6z" fill="#57a639" /><path d="M7 3.500v7M3.500 7h7" stroke="#1f4f1d" strokeWidth="2" /></svg>
          <svg width="13" height="14" viewBox="0 0 13 14"><ellipse cx="6.500" cy="7" rx="5.500" ry="6.500" fill="#111" /><ellipse cx="6.500" cy="9" rx="3.300" ry="3.800" fill="#fff" /><path d="M2 6.500c3 2 6 2 9 0v2c-3 1.500-6 1.500-9 0z" fill="#d8281e" /><path d="M1 12h4v2H1zM8 12h4v2H8zM5 4.500h3l-1.500 1z" fill="#f3a41c" /></svg>
          <svg width="14" height="12" viewBox="0 0 14 12" fill="none" stroke="#e0e1e2"><path d="M1 4h2l3-3v10L3 8H1zM8.500 4l4 4M12.500 4l-4 4" strokeWidth="1.200" /></svg>
          <svg width="15" height="13" viewBox="0 0 15 13" fill="none" stroke="#bfc1c3" strokeWidth="1.300"><path d="M2 12C2 6 7 2 13 2M5 12c0-4 4-7 8-7M8 12c0-2 2-4 5-4M11 12l2-1" /></svg>
          <svg width="16" height="14" viewBox="0 0 16 14" fill="none" stroke="#e4e5e6" strokeWidth="1.500"><path d="M6 9c-3-2-6 1-4 3s6-2 7-6 3-6 4-4-4 6-6 7 1 2 3 0 2-3 5-4" /></svg>
          <svg width="13" height="13" viewBox="0 0 13 13" fill="none" stroke="#a4a6a8" strokeWidth="1.300"><circle cx="6.500" cy="6.500" r="5.500" /><path d="M4 4l5 5M9 4L4 9" strokeWidth="1.800" /></svg>
          <svg width="13" height="13" viewBox="0 0 13 13"><rect width="13" height="13" fill="#f4f4f4" /><path d="M12 1L6 8M3 7l3 3" stroke="#333" strokeWidth="1.500" /><path d="M0 13l4-3h3z" fill="#333" /></svg>
        </Tray>
        <Clock>16:52 周六<br />2022/5/14</Clock>
        <svg width="15" height="34" viewBox="0 0 15 34"><path d="M4 11h12v12H4z" fill="#f4f4f4" /><path d="M8 14l4 3-4 3z" fill="#333" /><circle cx="16" cy="22" r="5" fill="#ef2b1f" /></svg>
      </TaskBar>
    </Window>
  );
}
